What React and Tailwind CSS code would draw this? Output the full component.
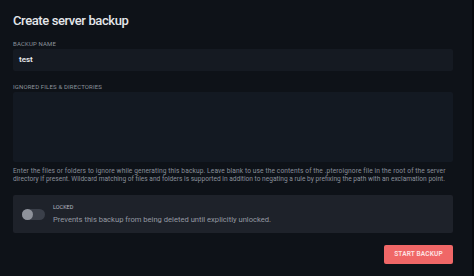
import React from 'react';

const font = { fontFamily: 'Roboto, "Liberation Sans", sans-serif' };

export default function App() {
    return (
        <div className="w-[474px] h-[276px] bg-[#07090c] flex overflow-hidden" style={font}>
            <div className="w-[472px] h-full bg-[#0e1218] flex">
                <div className="w-[440px] ml-[13px] flex flex-col">
                    <h2 className="mt-[13px] text-[13px] leading-[16px] font-medium tracking-[-0.4px] text-[#e3e6ea]">Create server backup</h2>

                    <label className="mt-[11px] text-[6px] leading-[8px] uppercase text-[#8d939c] tracking-wide">Backup Name</label>
                    <div className="mt-[1px] h-[22px] bg-[#151a22] rounded-[2px] flex items-center pl-[6px]">
                        <span className="text-[8px] font-semibold text-[#e8eaee]">test</span>
                    </div>

                    <label className="mt-[12px] text-[6px] leading-[8px] uppercase text-[#8d939c] tracking-wide">Ignored Files &amp; Directories</label>
                    <div className="mt-[1px] h-[70px] bg-[#131922] rounded-[2px]" />

                    <p className="mt-[5px] text-[6.6px] leading-[8px] text-[#8a909a] whitespace-nowrap">
                        <span className="tracking-[0.12px]">Enter the files or folders to ignore while generating this backup. Leave blank to use the contents of the .pteroignore file in the root of the server</span>
                        <br />
                        directory if present. Wildcard matching of files and folders is supported in addition to negating a rule by prefixing the path with an exclamation point.
                    </p>

                    <div className="mt-[12px] h-[38px] bg-[#1e222a] rounded-[2px] flex items-center pl-[9px] gap-[8px]">
                        <div className="w-[23px] h-[11px] rounded-full bg-[#3a3f49] flex items-center">
                            <div className="w-[11px] h-[11px] rounded-full bg-[#8e929b]" />
                        </div>
                        <div className="flex flex-col gap-[4px] -mt-[1px]">
                            <span className="text-[5.5px] leading-[7px] uppercase text-[#b5b9c0]">Locked</span>
                            <span className="text-[7.6px] leading-[9px] text-[#9499a2]">Prevents this backup from being deleted until explicitly unlocked.</span>
                        </div>
                    </div>

                    <button className="mt-[12px] self-end w-[69px] h-[19px] bg-[#f06767] rounded-[2px] text-[6.5px] font-semibold uppercase tracking-wide text-[#fde4e4]">
                        Start Backup
                    </button>
                </div>
            </div>
        </div>
    );
}
